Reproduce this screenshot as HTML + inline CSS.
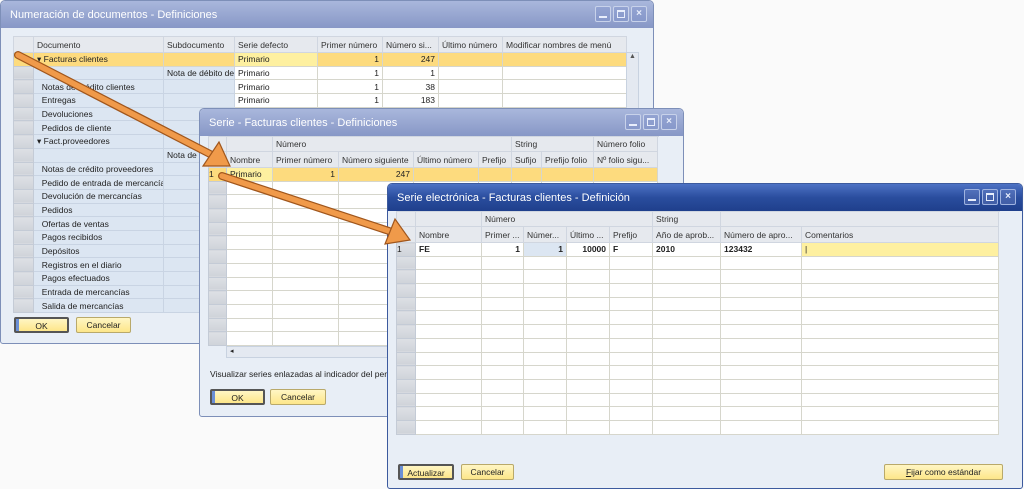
<!DOCTYPE html>
<html><head><meta charset="utf-8"><style>
*{box-sizing:border-box;margin:0;padding:0}
body{width:1024px;height:488px;background:#fafafa;position:relative;overflow:hidden;font-family:"Liberation Sans",sans-serif;font-size:8.5px;color:#222}
.win{position:absolute;background:#e8eef6;border:1px solid #7d8fb8;border-radius:5px 5px 3px 3px;overflow:hidden}
.tb{position:absolute;left:0;right:0;top:0;height:27px;background:linear-gradient(#a9b7dc,#8797c6);color:#fff;font-size:11px;padding:8px 0 0 9px;white-space:nowrap}
.tb.dark{background:linear-gradient(#4d72c4,#2a4d9e 50%,#1f3f8c)}
.ctl{position:absolute;top:5px;width:16px;height:16px;border:1px solid #c8d2ea;background:rgba(120,140,200,.35);border-radius:2px;color:#e8eefc;font-size:10px;line-height:14px;text-align:center;font-weight:bold}
.ctl.mn::after{content:"";position:absolute;left:3px;right:3px;bottom:3px;height:2px;background:#e8eefc}
.ctl.mx::after{content:"";position:absolute;left:3px;right:3px;top:3px;bottom:3px;border:1px solid #e8eefc;border-top-width:2px}
table{position:absolute;border-collapse:collapse;table-layout:fixed;background:#fff}
td{border:1px solid #d6d6cc;padding:0 3px;white-space:nowrap;overflow:hidden;height:13.7px;line-height:12px}
td.h{background:#e6e9ee;border-color:#d0d6e0;color:#333}
td.rh{background:linear-gradient(#dde0e5,#cfd3d9);border-color:#c4cbd6;padding:0}
td.bl{background:#dce6f2;border-color:#c9d4e3}
tr.sel td{background:#fddb7e}
td.r{text-align:right}
td.b{font-weight:bold}
.btn{position:absolute;height:16px;border:1px solid #b9a96a;border-radius:2px;background:linear-gradient(#fff6c4,#fde68a);text-align:center;line-height:14px;font-size:8.5px}
.btn.def{border:2px solid #555;box-shadow:inset 3px 0 0 #6b8fd6}
</style></head><body>

<!-- Window 1 -->
<div class="win" style="left:0;top:0;width:654px;height:344px">
 <div class="tb">Numeración de documentos - Definiciones</div>
 <div class="ctl mn" style="left:594px"></div><div class="ctl mx" style="left:612px"></div><div class="ctl" style="left:630px">×</div>
 <table style="left:12px;top:35px;width:613px">
  <colgroup><col style="width:20px"><col style="width:130px"><col style="width:71px"><col style="width:83px"><col style="width:65px"><col style="width:56px"><col style="width:64px"><col style="width:124px"></colgroup>
  <tr style="height:16px"><td class="h"></td><td class="h">Documento</td><td class="h">Subdocumento</td><td class="h">Serie defecto</td><td class="h">Primer número</td><td class="h">Número si...</td><td class="h">Último número</td><td class="h">Modificar nombres de menú</td></tr>
  <tr class="sel"><td class="rh"></td><td>▾ Facturas clientes</td><td></td><td style="background:#fef0a0">Primario</td><td class="r">1</td><td class="r">247</td><td></td><td></td></tr>
  <tr><td class="rh"></td><td class="bl"></td><td class="bl">Nota de débito de</td><td>Primario</td><td class="r">1</td><td class="r">1</td><td></td><td></td></tr>
  <tr><td class="rh"></td><td class="bl">&nbsp;&nbsp;Notas de crédito clientes</td><td class="bl"></td><td>Primario</td><td class="r">1</td><td class="r">38</td><td></td><td></td></tr>
  <tr><td class="rh"></td><td class="bl">&nbsp;&nbsp;Entregas</td><td class="bl"></td><td>Primario</td><td class="r">1</td><td class="r">183</td><td></td><td></td></tr>
  <tr><td class="rh"></td><td class="bl">&nbsp;&nbsp;Devoluciones</td><td class="bl"></td><td></td><td></td><td></td><td></td><td></td></tr>
  <tr><td class="rh"></td><td class="bl">&nbsp;&nbsp;Pedidos de cliente</td><td class="bl"></td><td></td><td></td><td></td><td></td><td></td></tr>
  <tr><td class="rh"></td><td class="bl">▾ Fact.proveedores</td><td class="bl"></td><td></td><td></td><td></td><td></td><td></td></tr>
  <tr><td class="rh"></td><td class="bl"></td><td class="bl">Nota de c</td><td></td><td></td><td></td><td></td><td></td></tr>
  <tr><td class="rh"></td><td class="bl">&nbsp;&nbsp;Notas de crédito proveedores</td><td class="bl"></td><td></td><td></td><td></td><td></td><td></td></tr>
  <tr><td class="rh"></td><td class="bl">&nbsp;&nbsp;Pedido de entrada de mercancías</td><td class="bl"></td><td></td><td></td><td></td><td></td><td></td></tr>
  <tr><td class="rh"></td><td class="bl">&nbsp;&nbsp;Devolución de mercancías</td><td class="bl"></td><td></td><td></td><td></td><td></td><td></td></tr>
  <tr><td class="rh"></td><td class="bl">&nbsp;&nbsp;Pedidos</td><td class="bl"></td><td></td><td></td><td></td><td></td><td></td></tr>
  <tr><td class="rh"></td><td class="bl">&nbsp;&nbsp;Ofertas de ventas</td><td class="bl"></td><td></td><td></td><td></td><td></td><td></td></tr>
  <tr><td class="rh"></td><td class="bl">&nbsp;&nbsp;Pagos recibidos</td><td class="bl"></td><td></td><td></td><td></td><td></td><td></td></tr>
  <tr><td class="rh"></td><td class="bl">&nbsp;&nbsp;Depósitos</td><td class="bl"></td><td></td><td></td><td></td><td></td><td></td></tr>
  <tr><td class="rh"></td><td class="bl">&nbsp;&nbsp;Registros en el diario</td><td class="bl"></td><td></td><td></td><td></td><td></td><td></td></tr>
  <tr><td class="rh"></td><td class="bl">&nbsp;&nbsp;Pagos efectuados</td><td class="bl"></td><td></td><td></td><td></td><td></td><td></td></tr>
  <tr><td class="rh"></td><td class="bl">&nbsp;&nbsp;Entrada de mercancías</td><td class="bl"></td><td></td><td></td><td></td><td></td><td></td></tr>
  <tr><td class="rh"></td><td class="bl">&nbsp;&nbsp;Salida de mercancías</td><td class="bl"></td><td></td><td></td><td></td><td></td><td></td></tr>
 </table>
 <div style="position:absolute;left:625px;top:51px;width:13px;height:60px;background:#e4e9f1;border:1px solid #c8d2e0;font-size:7px;text-align:center;color:#555">▲</div>
 <div class="btn def" style="left:13px;top:316px;width:55px">OK</div>
 <div class="btn" style="left:75px;top:316px;width:55px">Cancelar</div>
</div>

<!-- Window 2 -->
<div class="win" style="left:199px;top:108px;width:485px;height:309px">
 <div class="tb">Serie - Facturas clientes - Definiciones</div>
 <div class="ctl mn" style="left:425px"></div><div class="ctl mx" style="left:443px"></div><div class="ctl" style="left:461px">×</div>
 <table style="left:8px;top:27px;width:449px">
  <colgroup><col style="width:18px"><col style="width:46px"><col style="width:66px"><col style="width:75px"><col style="width:65px"><col style="width:33px"><col style="width:30px"><col style="width:52px"><col style="width:64px"></colgroup>
  <tr style="height:15px"><td class="h"></td><td class="h"></td><td class="h" colspan="4">Número</td><td class="h" colspan="2">String</td><td class="h" colspan="2">Número folio</td></tr>
  <tr style="height:16px"><td class="h"></td><td class="h">Nombre</td><td class="h">Primer número</td><td class="h">Número siguiente</td><td class="h">Último número</td><td class="h">Prefijo</td><td class="h">Sufijo</td><td class="h">Prefijo folio</td><td class="h">Nº folio sigu...</td></tr>
  <tr class="sel"><td class="rh">1</td><td style="background:#fef0a0">Primario</td><td class="r">1</td><td class="r">247</td><td></td><td></td><td></td><td></td><td></td></tr>
  <tr><td class="rh"></td><td></td><td></td><td></td><td></td><td></td><td></td><td></td><td></td></tr>
  <tr><td class="rh"></td><td></td><td></td><td></td><td></td><td></td><td></td><td></td><td></td></tr>
  <tr><td class="rh"></td><td></td><td></td><td></td><td></td><td></td><td></td><td></td><td></td></tr>
  <tr><td class="rh"></td><td></td><td></td><td></td><td></td><td></td><td></td><td></td><td></td></tr>
  <tr><td class="rh"></td><td></td><td></td><td></td><td></td><td></td><td></td><td></td><td></td></tr>
  <tr><td class="rh"></td><td></td><td></td><td></td><td></td><td></td><td></td><td></td><td></td></tr>
  <tr><td class="rh"></td><td></td><td></td><td></td><td></td><td></td><td></td><td></td><td></td></tr>
  <tr><td class="rh"></td><td></td><td></td><td></td><td></td><td></td><td></td><td></td><td></td></tr>
  <tr><td class="rh"></td><td></td><td></td><td></td><td></td><td></td><td></td><td></td><td></td></tr>
  <tr><td class="rh"></td><td></td><td></td><td></td><td></td><td></td><td></td><td></td><td></td></tr>
  <tr><td class="rh"></td><td></td><td></td><td></td><td></td><td></td><td></td><td></td><td></td></tr>
  <tr><td class="rh"></td><td></td><td></td><td></td><td></td><td></td><td></td><td></td><td></td></tr>
 </table>
 <div style="position:absolute;left:26px;top:237px;width:200px;height:12px;background:#e4e9f1;border:1px solid #c8d2e0;font-size:7px;padding-left:3px">◂</div>
 <div style="position:absolute;left:10px;top:260px;white-space:nowrap">Visualizar series enlazadas al indicador del período</div>
 <div class="btn def" style="left:10px;top:280px;width:55px">OK</div>
 <div class="btn" style="left:70px;top:280px;width:56px">Cancelar</div>
</div>

<!-- Window 3 -->
<div class="win" style="left:387px;top:183px;width:636px;height:306px;border-color:#3c5a9e">
 <div class="tb dark">Serie electrónica - Facturas clientes - Definición</div>
 <div class="ctl mn" style="left:576px;border-color:#9fb3e0"></div><div class="ctl mx" style="left:594px;border-color:#9fb3e0"></div><div class="ctl" style="left:612px;border-color:#9fb3e0">×</div>
 <table style="left:8px;top:27px;width:602px">
  <colgroup><col style="width:19px"><col style="width:66px"><col style="width:42px"><col style="width:43px"><col style="width:43px"><col style="width:43px"><col style="width:68px"><col style="width:81px"><col style="width:197px"></colgroup>
  <tr style="height:15px"><td class="h"></td><td class="h"></td><td class="h" colspan="4">Número</td><td class="h">String</td><td class="h" colspan="3"></td></tr>
  <tr style="height:16px"><td class="h">#</td><td class="h">Nombre</td><td class="h">Primer ...</td><td class="h">Númer...</td><td class="h">Último ...</td><td class="h">Prefijo</td><td class="h">Año de aprob...</td><td class="h">Número de apro...</td><td class="h">Comentarios</td></tr>
  <tr><td class="rh">1</td><td class="b">FE</td><td class="r b">1</td><td class="r b" style="background:#dce6f2">1</td><td class="r b">10000</td><td class="b">F</td><td class="b">2010</td><td class="b">123432</td><td style="background:#fef0a0">|</td></tr>
  <tr><td class="rh"></td><td></td><td></td><td></td><td></td><td></td><td></td><td></td><td></td></tr>
  <tr><td class="rh"></td><td></td><td></td><td></td><td></td><td></td><td></td><td></td><td></td></tr>
  <tr><td class="rh"></td><td></td><td></td><td></td><td></td><td></td><td></td><td></td><td></td></tr>
  <tr><td class="rh"></td><td></td><td></td><td></td><td></td><td></td><td></td><td></td><td></td></tr>
  <tr><td class="rh"></td><td></td><td></td><td></td><td></td><td></td><td></td><td></td><td></td></tr>
  <tr><td class="rh"></td><td></td><td></td><td></td><td></td><td></td><td></td><td></td><td></td></tr>
  <tr><td class="rh"></td><td></td><td></td><td></td><td></td><td></td><td></td><td></td><td></td></tr>
  <tr><td class="rh"></td><td></td><td></td><td></td><td></td><td></td><td></td><td></td><td></td></tr>
  <tr><td class="rh"></td><td></td><td></td><td></td><td></td><td></td><td></td><td></td><td></td></tr>
  <tr><td class="rh"></td><td></td><td></td><td></td><td></td><td></td><td></td><td></td><td></td></tr>
  <tr><td class="rh"></td><td></td><td></td><td></td><td></td><td></td><td></td><td></td><td></td></tr>
  <tr><td class="rh"></td><td></td><td></td><td></td><td></td><td></td><td></td><td></td><td></td></tr>
  <tr><td class="rh"></td><td></td><td></td><td></td><td></td><td></td><td></td><td></td><td></td></tr>
 </table>
 <div class="btn def" style="left:10px;top:280px;width:56px">Actualizar</div>
 <div class="btn" style="left:73px;top:280px;width:53px">Cancelar</div>
 <div class="btn" style="left:496px;top:280px;width:119px"><u>F</u>ijar como estándar</div>
</div>

<!-- Arrows -->
<svg style="position:absolute;left:0;top:0" width="1024" height="488">
 <g stroke="#a0561c" stroke-width="8" stroke-linecap="round" fill="none">
  <line x1="18" y1="55" x2="212" y2="155"/><line x1="222" y1="176" x2="392" y2="232"/>
 </g>
 <g stroke="#f09a4a" stroke-width="5.5" stroke-linecap="round" fill="none">
  <line x1="18" y1="55" x2="212" y2="155"/><line x1="222" y1="176" x2="392" y2="232"/>
 </g>
 <polygon points="230,166 203,166 219,142" fill="#f09a4a" stroke="#a0561c" stroke-width="1.2"/>
 <polygon points="410,240 385,244 395,219" fill="#f09a4a" stroke="#a0561c" stroke-width="1.2"/>
</svg>
</body></html>
